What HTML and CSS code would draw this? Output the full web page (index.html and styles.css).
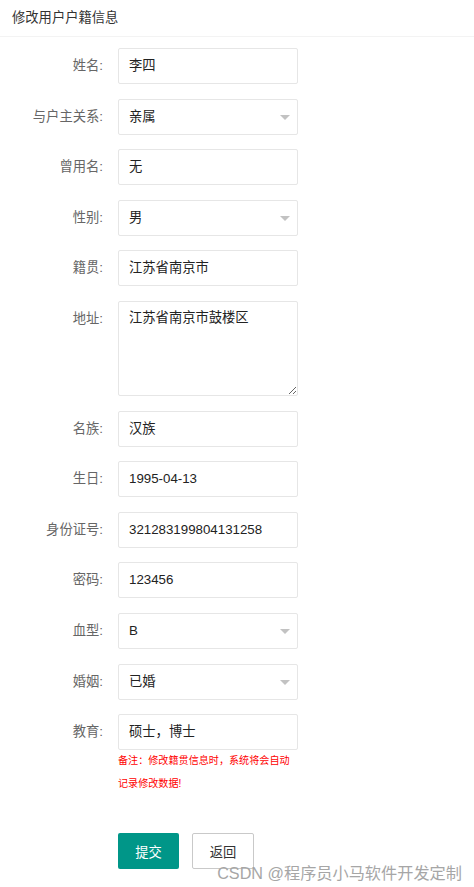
FILE: index.html
```html
<!DOCTYPE html>
<html lang="zh-CN">
<head>
<meta charset="utf-8">
<title>修改用户户籍信息</title>
<link rel="stylesheet" href="styles.css">
</head>
<body>
<div class="page">
  <div class="header">修改用户户籍信息</div>
  <form class="form">
    <div class="row"><label class="label">姓名:</label><div class="field">李四</div></div>
    <div class="row"><label class="label">与户主关系:</label><div class="field select">亲属</div></div>
    <div class="row"><label class="label">曾用名:</label><div class="field">无</div></div>
    <div class="row"><label class="label">性别:</label><div class="field select">男</div></div>
    <div class="row"><label class="label">籍贯:</label><div class="field">江苏省南京市</div></div>
    <div class="row"><label class="label">地址:</label><textarea class="area">江苏省南京市鼓楼区</textarea></div>
    <div class="row"><label class="label">名族:</label><div class="field">汉族</div></div>
    <div class="row"><label class="label">生日:</label><div class="field">1995-04-13</div></div>
    <div class="row"><label class="label">身份证号:</label><div class="field">321283199804131258</div></div>
    <div class="row"><label class="label">密码:</label><div class="field">123456</div></div>
    <div class="row"><label class="label">血型:</label><div class="field select">B</div></div>
    <div class="row"><label class="label">婚姻:</label><div class="field select">已婚</div></div>
    <div class="row last"><label class="label">教育:</label><div class="field">硕士，博士</div></div>
    <div class="note-row"><p class="note">备注：修改籍贯信息时，系统将会自动记录修改数据!</p></div>
    <div class="btn-row">
      <button type="button" class="btn primary">提交</button>
      <button type="button" class="btn plain">返回</button>
    </div>
  </form>
  <div class="watermark">CSDN @程序员小马软件开发定制</div>
</div>
</body>
</html>
```
FILE: styles.css
```css
* { box-sizing: border-box; }
html, body { margin: 0; padding: 0; background: #fff; }
body {
  font-family: "Liberation Sans", "Noto Sans CJK SC", sans-serif;
  font-size: 13.3px;
  color: #333;
}
.page { position: relative; width: 474px; height: 887px; overflow: hidden; }
.header {
  height: 37px;
  line-height: 35px;
  padding-left: 12px;
  color: #333;
  border-bottom: 1px solid #f3f3f3;
}
.form { padding-top: 11px; }
.row {
  display: grid;
  grid-template-columns: 118px 180px;
  margin-bottom: 14.6px;
}
.row.last { margin-bottom: 0; }
.label {
  text-align: right;
  padding-right: 15px;
  line-height: 36px;
  color: #666;
  white-space: nowrap;
}
.field {
  position: relative;
  height: 36px;
  line-height: 34px;
  padding-left: 10px;
  border: 1px solid #e6e6e6;
  border-radius: 2px;
  color: #222;
  background: #fff;
}
.select::after {
  content: "";
  position: absolute;
  right: 7px;
  top: 15px;
  border-left: 5px solid transparent;
  border-right: 5px solid transparent;
  border-top: 5px solid #c2c2c2;
}
.area {
  height: 95px;
  padding: 6px 10px;
  border: 1px solid #e6e6e6;
  border-radius: 2px;
  font: inherit;
  line-height: 20px;
  color: #222;
  resize: vertical;
  outline: none;
  margin: 0;
}
.note-row { padding-left: 118px; }
.note {
  width: 180px;
  margin: 0;
  font-size: 10.1px;
  line-height: 22.5px;
  color: #f00;
}
.btn-row {
  display: flex;
  gap: 13px;
  padding-left: 118px;
  margin-top: 38px;
}
.btn {
  height: 36px;
  margin: 0;
  padding: 0;
  font: inherit;
  border-radius: 2px;
  cursor: pointer;
}
.btn.primary {
  width: 61px;
  background: #009688;
  border: none;
  color: #fff;
}
.btn.plain {
  width: 62px;
  background: #fff;
  border: 1px solid #c9c9c9;
  color: #333;
}
.watermark {
  position: absolute;
  right: 12px;
  top: 862px;
  font-size: 16.2px;
  line-height: 22px;
  color: #a6a6a6;
  white-space: nowrap;
}
```
